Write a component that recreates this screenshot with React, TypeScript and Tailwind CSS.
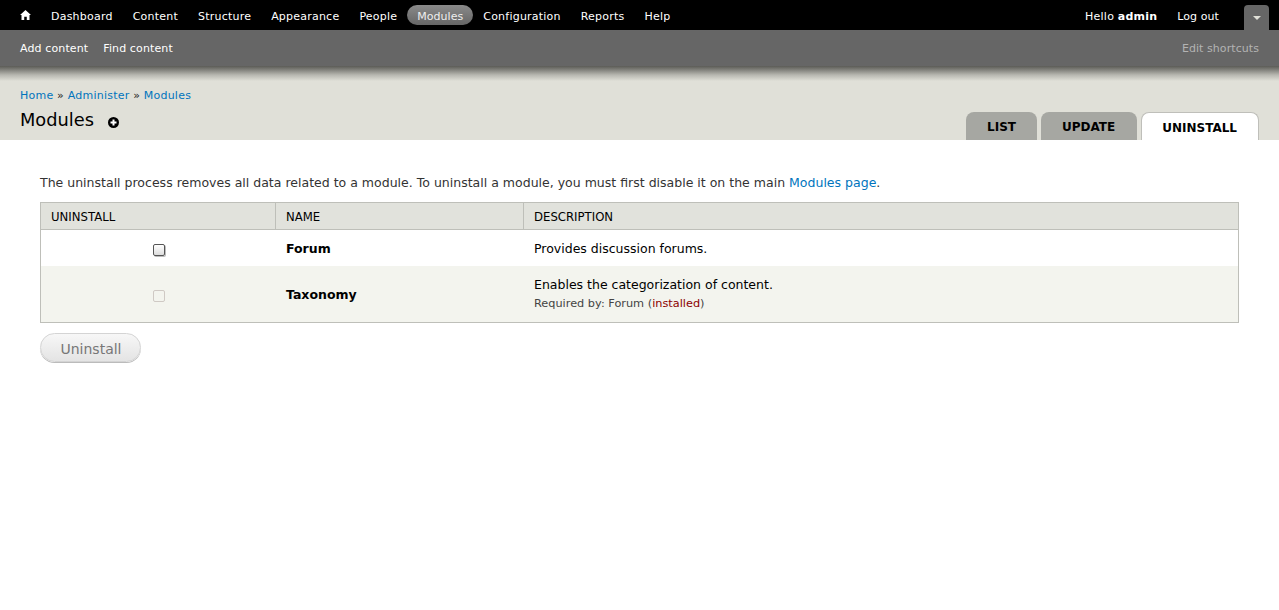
const menu = [
  { label: "Dashboard" },
  { label: "Content" },
  { label: "Structure" },
  { label: "Appearance" },
  { label: "People" },
  { label: "Modules", active: true },
  { label: "Configuration" },
  { label: "Reports" },
  { label: "Help" },
];

function Toolbar() {
  return (
    <div className="text-[11px] text-white">
      {/* Top menu */}
      <div className="h-[30px] bg-black flex items-center pl-[20px] pr-[10px] tracking-[0.22px]">
        <svg width="11" height="10" viewBox="0 0 12 11" className="mr-[10px]">
          <path d="M6 0 L12 5.6 L10.4 5.6 L10.4 11 L7.4 11 L7.4 7.4 L4.6 7.4 L4.6 11 L1.6 11 L1.6 5.6 L0 5.6 Z" fill="#fff" />
        </svg>
        <div className="flex items-center">
          {menu.map((m) => (
            <a
              key={m.label}
              className={
                m.active
                  ? "h-[20px] px-[10px] pt-[4px] rounded-[10px] flex items-center tracking-[0.04px] bg-gradient-to-b from-[#8a8a8a] to-[#666666] text-[#eeeeee]"
                  : "h-[20px] px-[10px] pt-[4px] flex items-center"
              }
            >
              {m.label}
            </a>
          ))}
        </div>
        <div className="ml-auto flex items-center self-stretch">
          <span className="pt-[4px]">
            Hello <b>admin</b>
          </span>
          <a className="ml-[20px] pt-[4px] tracking-[0.08px]">Log out</a>
          <div className="ml-[25px] w-[25px] h-[25px] mt-[5px] rounded-t-[4px] bg-[#666666] flex items-center justify-center">
            <svg width="8" height="4" viewBox="0 0 8 4">
              <path d="M0 0 H8 L4 4 Z" fill="#e0e0d8" />
            </svg>
          </div>
        </div>
      </div>
      {/* Shortcuts */}
      <div className="h-[36px] bg-[#666666] flex items-center px-[20px] gap-[15px] pt-[3px] tracking-[0.12px]">
        <a>Add content</a>
        <a>Find content</a>
        <a className="ml-auto text-[#b3b3b3] tracking-[0.07px]">Edit shortcuts</a>
      </div>
    </div>
  );
}

function Head() {
  return (
    <div className="h-[74px] bg-[#e0e0d8] relative px-[20px]">
      <div className="h-[15px] bg-gradient-to-b from-[#5c5c57] via-[#b8b8b1] via-60% to-[#e0e0d8] -mx-[20px]" />
      <div className="pt-[8px] text-[11px] tracking-[0.22px] leading-[14px] text-[#222222]">
        <a className="text-[#0074bd]">Home</a> » <a className="text-[#0074bd]">Administer</a> »{" "}
        <a className="text-[#0074bd]">Modules</a>
      </div>
      <div className="flex items-end justify-between">
        <div className="flex items-center mt-[5px]">
          <h1 className="text-[17.8px] leading-[24px] font-normal text-black">Modules</h1>
          <span className="ml-[14px] mt-[5px] w-[11px] h-[11px] rounded-full bg-black flex items-center justify-center">
            <svg width="7" height="7" viewBox="0 0 7 7">
              <path d="M2.5 0.5 H4.5 V2.5 H6.5 V4.5 H4.5 V6.5 H2.5 V4.5 H0.5 V2.5 H2.5 Z" fill="#fff" />
            </svg>
          </span>
        </div>
        <div className="flex gap-[4px] absolute right-[20px] bottom-0 text-[12px] font-bold text-black">
          <a className="h-[28px] px-[21px] pt-[2px] rounded-t-[8px] bg-[#a6a7a2] flex items-center">LIST</a>
          <a className="h-[28px] pl-[21px] pr-[22px] pt-[2px] rounded-t-[8px] bg-[#a6a7a2] flex items-center">UPDATE</a>
          <a className="h-[28px] pl-[20px] pr-[21px] pt-[2px] rounded-t-[8px] bg-white border border-b-0 border-[#bfbfba] flex items-center">UNINSTALL</a>
        </div>
      </div>
    </div>
  );
}

function ModuleTable() {
  return (
    <div className="mt-[11px] border border-[#bebfb9] text-[12.5px]">
      <div className="h-[27px] grid grid-cols-[234px_248px_1fr] bg-[#e1e2dc] border-b border-[#bebfb9] text-black text-[11.7px]">
        <div className="px-[10px] pt-[3px] flex items-center">UNINSTALL</div>
        <div className="px-[10px] pt-[3px] flex items-center border-l border-[#bebfb9]">NAME</div>
        <div className="px-[10px] pt-[3px] flex items-center border-l border-[#bebfb9]">DESCRIPTION</div>
      </div>
      <div className="h-[36px] grid grid-cols-[236px_248px_1fr] bg-white items-center">
        <div className="flex justify-center">
          <span className="w-[12px] h-[12px] rounded-[2px] border border-[#555555] bg-gradient-to-b from-white to-[#dddddd] mt-[3px] shadow-[1px_1px_0_#bbbbbb]" />
        </div>
        <b className="px-[9px] pt-[2px] text-black">Forum</b>
        <div className="px-[9px] pt-[2px] text-black">Provides discussion forums.</div>
      </div>
      <div className="h-[56px] grid grid-cols-[236px_248px_1fr] bg-[#f3f4ee] items-center">
        <div className="flex justify-center">
          <span className="w-[12px] h-[12px] rounded-[2px] border border-[#cfc9c4] bg-[#f3f4ee] mt-[3px]" />
        </div>
        <b className="px-[9px] pt-[2px] text-black">Taxonomy</b>
        <div className="px-[9px] text-black">
          <div className="leading-[18px]">Enables the categorization of content.</div>
          <div className="text-[11.3px] leading-[16px] text-[#444444] mt-[2px]">
            Required by: Forum (<span className="text-[#8b0000]">installed</span>)
          </div>
        </div>
      </div>
    </div>
  );
}

export default function App() {
  return (
    <div className="min-h-[610px] bg-white font-['DejaVu_Sans',sans-serif]">
      <Toolbar />
      <Head />
      <div className="px-[40px] pt-[35px]">
        <p className="text-[12.52px] leading-[16px] text-[#333333]">
          The uninstall process removes all data related to a module. To uninstall a module, you must first disable it on the main{" "}
          <a className="text-[#0074bd]">Modules page</a>.
        </p>
        <ModuleTable />
        <button className="mt-[10px] h-[29px] w-[101px] pt-[3px] pl-[1px] rounded-[15px] border border-[#d4d4d4] bg-gradient-to-b from-[#f7f7f7] to-[#e4e4e4] text-[14px] text-[#777777] shadow-[0_1px_0_#bbbbbb]">
          Uninstall
        </button>
      </div>
    </div>
  );
}
